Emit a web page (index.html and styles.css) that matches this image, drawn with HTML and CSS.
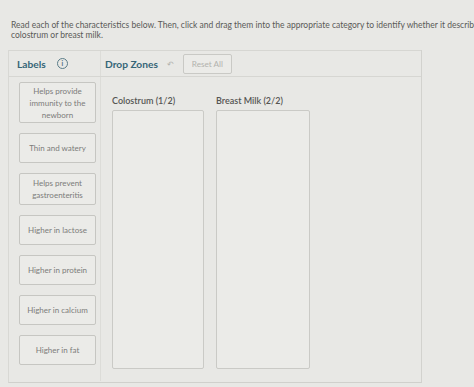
FILE: index.html
```html
<!DOCTYPE html>
<html lang="en">
<head>
  <meta charset="UTF-8">
  <meta name="viewport" content="width=device-width, initial-scale=1.0">
  <title>Colostrum or Breast Milk</title>
  <link rel="stylesheet" href="styles.css">
</head>
<body>
  <div class="intro">
    <p>Read each of the characteristics below. Then, click and drag them into the appropriate category to identify whether it describes</p>
    <p>colostrum or breast milk.</p>
  </div>

  <div class="panel">
    <div class="panel-head">
      <div class="head-labels">
        <span class="head-title">Labels</span>
        <span class="info-icon">i</span>
      </div>
      <div class="head-zones">
        <span class="head-title">Drop Zones</span>
        <span class="undo">&#8630;</span>
        <button class="reset-btn">Reset All</button>
      </div>
    </div>

    <div class="panel-body">
      <div class="labels">
        <div class="label-card">Helps provide immunity to the newborn</div>
        <div class="label-card">Thin and watery</div>
        <div class="label-card">Helps prevent gastroenteritis</div>
        <div class="label-card">Higher in lactose</div>
        <div class="label-card">Higher in protein</div>
        <div class="label-card">Higher in calcium</div>
        <div class="label-card">Higher in fat</div>
      </div>

      <div class="zones">
        <div class="zone">
          <div class="zone-title">Colostrum (1/2)</div>
          <div class="zone-box"></div>
        </div>
        <div class="zone">
          <div class="zone-title">Breast Milk (2/2)</div>
          <div class="zone-box wide"></div>
        </div>
      </div>
    </div>
  </div>
</body>
</html>
```

FILE: styles.css
```css
body {
  margin: 0;
  background: #e8e8e5;
  font-family: Lato, "Open Sans", sans-serif;
  overflow: hidden;
  height: 387px;
}
.intro {
  padding: 20px 0 0 11px;
  color: #5a5a58;
  font-size: 8.5px;
  line-height: 10px;
}
.intro p {
  margin: 0;
  white-space: nowrap;
}
.panel {
  margin: 10px 0 0 8px;
  width: 414px;
  height: 333px;
  border-left: 1px solid #d8d8d4;
  border-right: 1px solid #d2d2ce;
  border-bottom: 1px solid #d0d0cc;
  box-sizing: border-box;
}
.panel-head {
  display: flex;
  height: 27px;
  border-top: 1px solid #d6d6d2;
  border-bottom: 1px solid #d6d6d2;
  box-sizing: border-box;
}
.head-labels {
  width: 92px;
  display: flex;
  align-items: center;
  padding-left: 8px;
  box-sizing: border-box;
  border-right: 1px solid #dcdcd8;
}
.head-zones {
  display: flex;
  align-items: center;
  padding-left: 4px;
}
.head-title {
  color: #356577;
  font-size: 10.2px;
  font-weight: 700;
}
.info-icon {
  margin-left: 11px;
  width: 9px;
  height: 9px;
  border: 1px solid #5a7c88;
  border-radius: 50%;
  color: #4a6c78;
  font-size: 6.5px;
  font-weight: 700;
  line-height: 9px;
  text-align: center;
}
.undo {
  margin-left: 9px;
  color: #b4b4b0;
  font-size: 8px;
}
.reset-btn {
  margin-left: 9px;
  width: 49px;
  height: 20px;
  border: 1px solid #c9c9c5;
  border-radius: 2px;
  background: #ebebe8;
  color: #b2b2ae;
  font-family: inherit;
  font-size: 8.2px;
  padding: 0;
}
.panel-body {
  display: flex;
  height: 304px;
}
.labels {
  width: 92px;
  padding: 5px 0 0 10px;
  box-sizing: border-box;
  border-right: 1px solid #dcdcd8;
  display: flex;
  flex-direction: column;
  gap: 10px;
}
.label-card {
  width: 77px;
  min-height: 30px;
  padding: 3px 4px;
  box-sizing: border-box;
  border: 1px solid #c6c6c2;
  border-radius: 2px;
  background: #ebebe8;
  color: #7c7c7a;
  font-size: 8px;
  line-height: 12px;
  text-align: center;
  display: flex;
  align-items: center;
  justify-content: center;
}
.label-card:first-child {
  height: 41px;
  padding: 3px 8px;
}
.label-card:nth-child(3) {
  padding: 3px 12px;
}
.zones {
  display: flex;
  gap: 12px;
  padding: 18px 0 0 11px;
}
.zone-title {
  color: #555553;
  font-size: 9px;
  font-weight: 600;
  height: 15px;
}
.zone-box {
  width: 92px;
  height: 259px;
  border: 1px solid #cacac6;
  border-radius: 2px;
  background: #ebebe8;
  box-sizing: border-box;
}
.zone-box.wide {
  width: 94px;
}
```
